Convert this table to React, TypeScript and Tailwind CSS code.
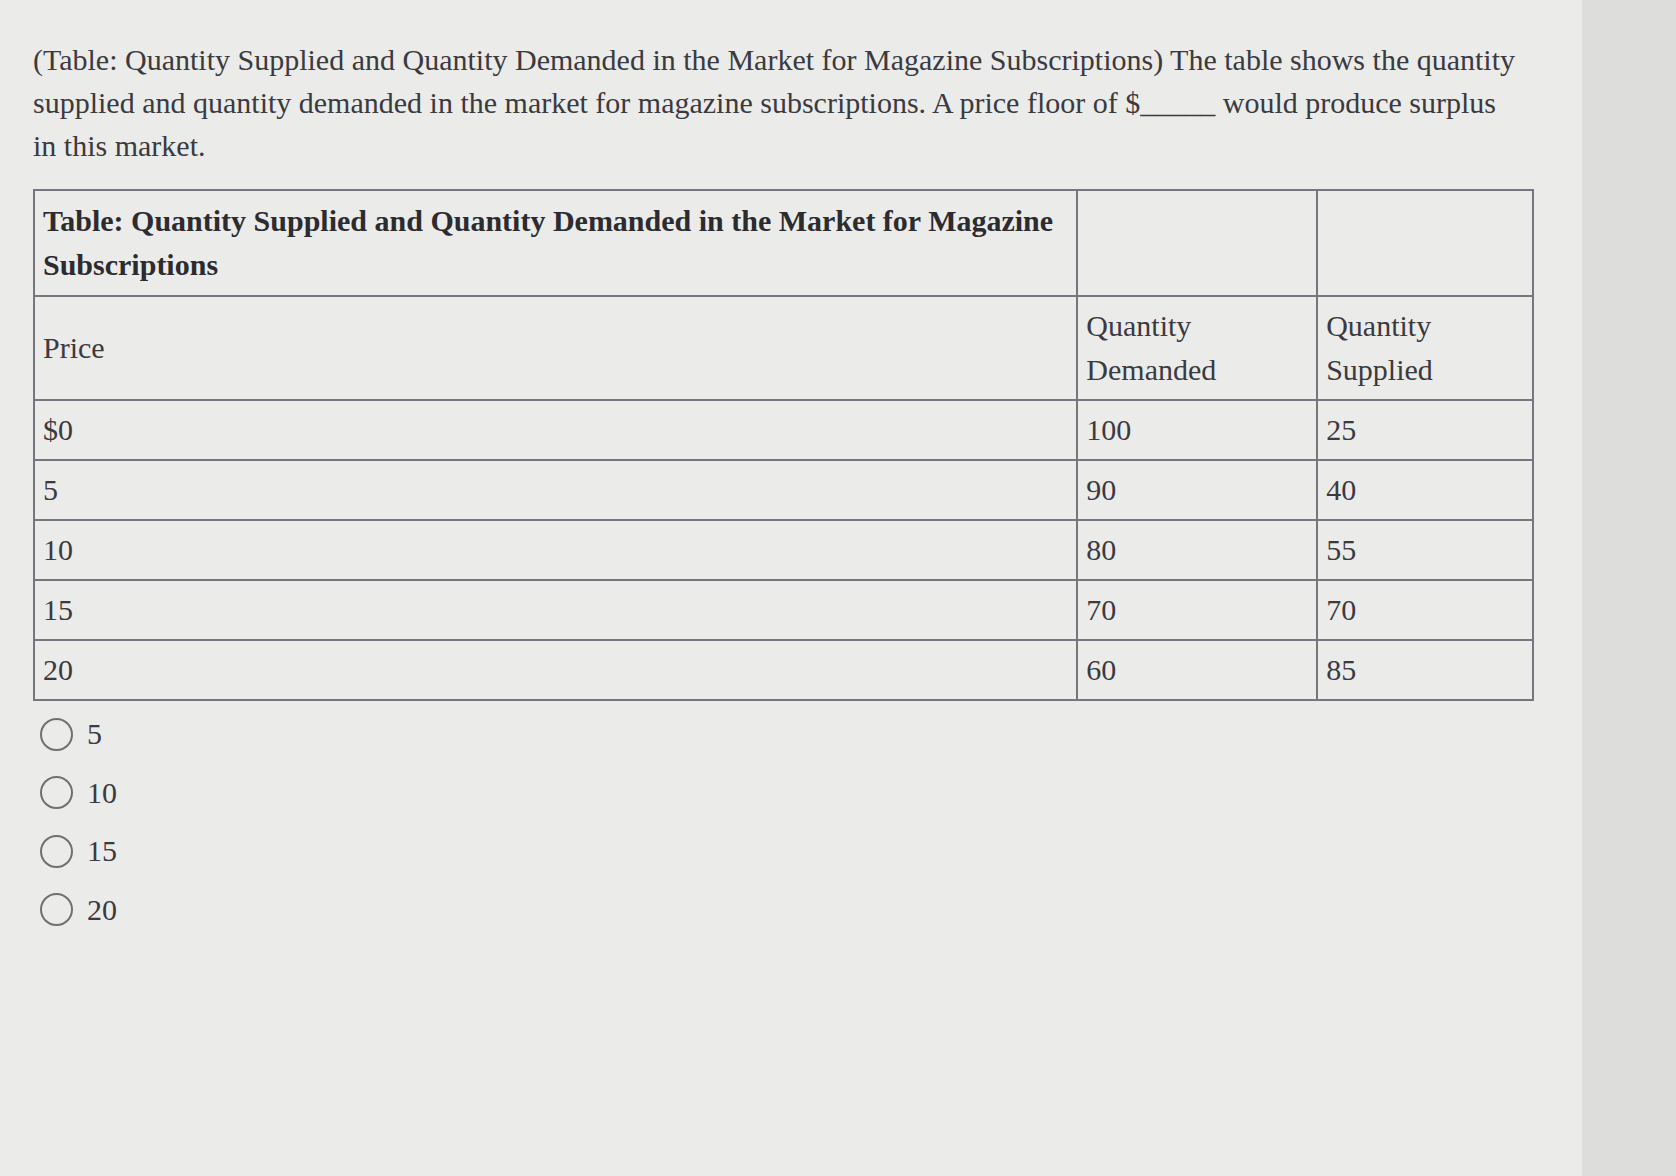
import React from "react";

const rows = [
  { price: "$0", demanded: "100", supplied: "25" },
  { price: "5", demanded: "90", supplied: "40" },
  { price: "10", demanded: "80", supplied: "55" },
  { price: "15", demanded: "70", supplied: "70" },
  { price: "20", demanded: "60", supplied: "85" },
];

const options = ["5", "10", "15", "20"];

const cell = "border-2 border-[#76767e] px-[8px] py-[7px] align-middle text-left";

export default function App() {
  return (
    <div className="min-h-screen flex bg-[#dddedc]">
      <div className="w-[1582px] min-h-[1176px] shrink-0 bg-[#ebebe9] pl-[33px] pt-[38px] font-['Liberation_Serif','Times_New_Roman',serif] text-[30px] text-[#3a3a3f]">
        <p className="leading-[43px]">
          (Table: Quantity Supplied and Quantity Demanded in the Market for Magazine Subscriptions) The table shows the quantity
          <br />
          supplied and quantity demanded in the market for magazine subscriptions. A price floor of $_____ would produce surplus
          <br />
          in this market.
        </p>

        <table className="mt-[22px] border-collapse w-[1501px] leading-[44px]">
          <colgroup>
            <col className="w-[1045px]" />
            <col className="w-[240px]" />
            <col className="w-[216px]" />
          </colgroup>
          <thead>
            <tr>
              <th className={`${cell} font-bold text-[#2b2b30] py-[8px]`}>
                Table: Quantity Supplied and Quantity Demanded in the Market for Magazine Subscriptions
              </th>
              <th className={cell}></th>
              <th className={cell}></th>
            </tr>
            <tr>
              <th className={`${cell} font-normal`}>Price</th>
              <th className={`${cell} font-normal`}>
                Quantity
                <br />
                Demanded
              </th>
              <th className={`${cell} font-normal`}>
                Quantity
                <br />
                Supplied
              </th>
            </tr>
          </thead>
          <tbody>
            {rows.map((r) => (
              <tr key={r.price}>
                <td className={cell}>{r.price}</td>
                <td className={cell}>{r.demanded}</td>
                <td className={cell}>{r.supplied}</td>
              </tr>
            ))}
          </tbody>
        </table>

        <div className="mt-[4px] flex flex-col">
          {options.map((o) => (
            <label key={o} className="flex h-[58.5px] items-center gap-[14px] pl-[7px]">
              <span className="h-[33px] w-[33px] rounded-full border-[2.5px] border-[#707073]" />
              <span className="leading-[44px]">{o}</span>
            </label>
          ))}
        </div>
      </div>
    </div>
  );
}
